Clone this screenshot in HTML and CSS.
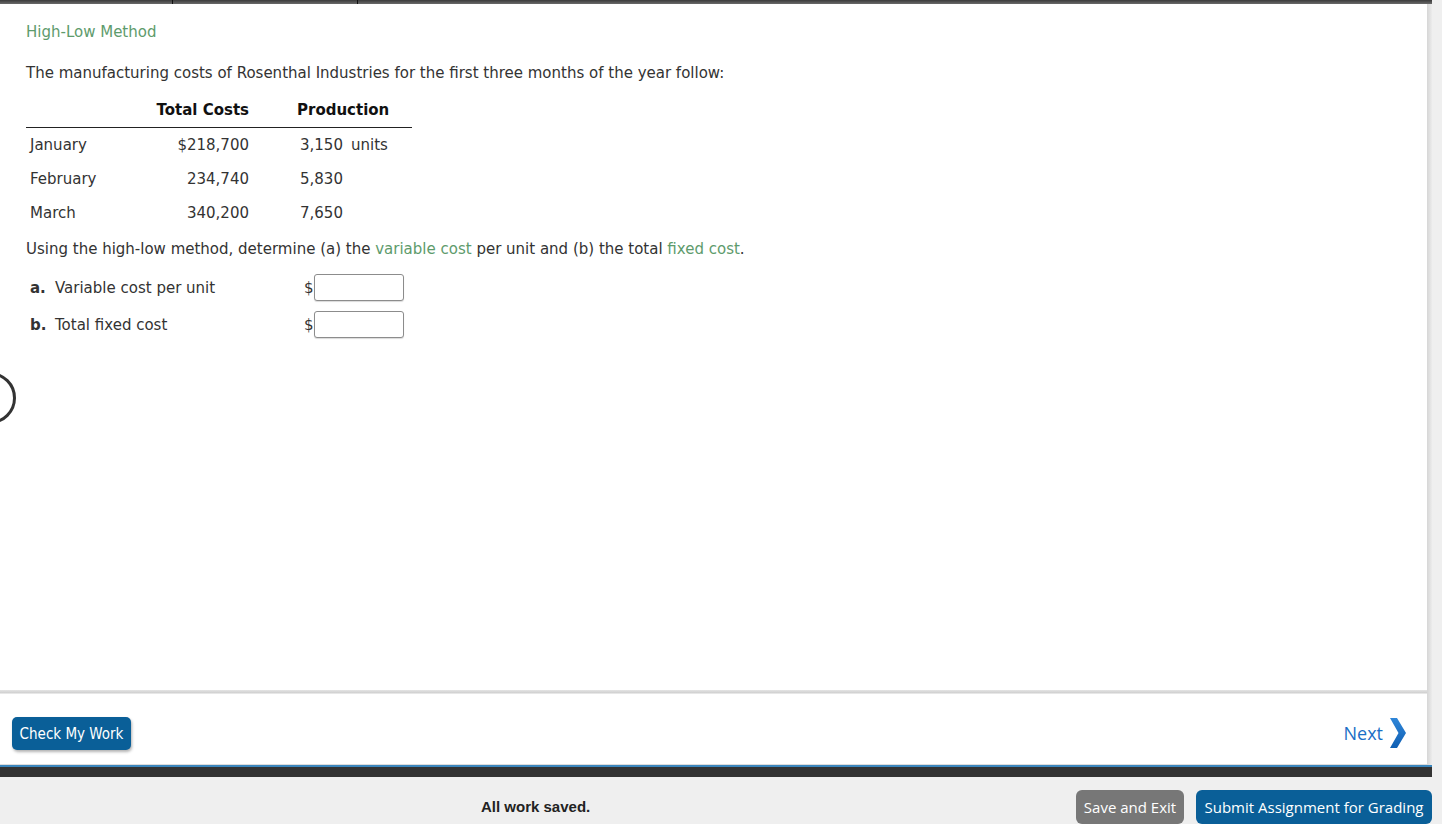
FILE: index.html
```html
<!DOCTYPE html>
<html>
<head>
<meta charset="utf-8">
<link rel="stylesheet" href="styles.css">
</head>
<body>
<div class="frame">
  <div class="topbar">
    <span class="seg seg1"></span><span class="seg seg2"></span><span class="seg seg3"></span>
  </div>
  <div class="body-row">
    <div class="col">
      <div class="content">
        <div class="title">High-Low Method</div>
        <p class="intro">The manufacturing costs of Rosenthal Industries for the first three months of the year follow:</p>
        <table class="data">
          <thead>
            <tr><th class="c1"></th><th class="c2">Total Costs</th><th class="c3">Production</th></tr>
          </thead>
          <tbody>
            <tr><td class="c1">January</td><td class="c2">$218,700</td><td class="c3">3,150<span class="unit">units</span></td></tr>
            <tr><td class="c1">February</td><td class="c2">234,740</td><td class="c3">5,830</td></tr>
            <tr><td class="c1">March</td><td class="c2">340,200</td><td class="c3">7,650</td></tr>
          </tbody>
        </table>
        <p class="question">Using the high-low method, determine (a) the <span class="term">variable cost</span> per unit and (b) the total <span class="term">fixed cost</span>.</p>
        <div class="answers">
          <div class="answer"><span class="letter">a.</span><span class="label">Variable cost per unit</span><span class="dollar">$</span><input class="box" type="text"></div>
          <div class="answer"><span class="letter">b.</span><span class="label">Total fixed cost</span><span class="dollar">$</span><input class="box" type="text"></div>
        </div>
        <div class="ring"></div>
      </div>
      <div class="footer">
        <button class="check">Check My Work</button>
        <a class="next">Next<svg class="chev" viewBox="0 0 18 32" width="18" height="32"><defs><linearGradient id="g" x1="0" y1="0" x2="0" y2="1"><stop offset="0" stop-color="#2f86d8"/><stop offset="1" stop-color="#0f5fb3"/></linearGradient></defs><path d="M1 1 L8 1 L17 16 L8 31 L1 31 L9.5 16 Z" fill="url(#g)"/></svg></a>
      </div>
    </div>
    <div class="strip"></div>
  </div>
  <div class="blueline"></div>
  <div class="darkbar"></div>
</div>
<div class="statusbar">
  <span class="saved">All work saved.</span>
  <div class="actions">
    <button class="save">Save and Exit</button>
    <button class="submit">Submit Assignment for Grading</button>
  </div>
</div>
</body>
</html>
```

FILE: styles.css
```css
html, body {
  margin: 0;
  padding: 0;
}
body {
  background: #efefef;
  font-family: "DejaVu Sans", Verdana, sans-serif;
  color: #333;
  width: 1442px;
  height: 824px;
  overflow: hidden;
}
.frame {
  width: 1432px;
}
.topbar {
  height: 4px;
  display: flex;
  background: linear-gradient(#3a3a3a, #6a6a6a);
}
.seg { height: 4px; }
.seg1 { width: 172px; border-right: 1px solid #111; }
.seg2 { width: 184px; border-right: 1px solid #111; }
.seg3 { flex: 1; }
.body-row {
  display: flex;
}
.col {
  width: 1427px;
  background: #fff;
}
.strip {
  width: 5px;
  background: linear-gradient(90deg, #d6d6d6, #e2e2e2 60%, #ececec);
}
.content {
  position: relative;
  height: 686px;
  padding: 0 0 0 26px;
  box-sizing: border-box;
  font-size: 15px;
}
.title {
  color: #5e9b6c;
  padding-top: 20px;
  line-height: 17px;
}
.intro {
  margin: 24px 0 0 0;
  line-height: 17px;
}
.data {
  border-collapse: collapse;
  table-layout: fixed;
  margin-top: 11px;
  width: 386px;
}
.data th {
  font-weight: bold;
  height: 34px;
  padding: 0;
  border-bottom: 1px solid #222;
  color: #111;
  vertical-align: middle;
}
.data td {
  height: 34px;
  padding: 0;
  vertical-align: middle;
}
.data .c1 { width: 114px; padding-left: 4px; text-align: left; }
.data .c2 { width: 105px; text-align: right; padding-right: 8px; }
.data .c3 { text-align: left; padding-left: 43px; }
.data th.c3 { padding-left: 40px; }
.unit { margin-left: 8px; }
.question {
  margin: 11px 0 0 0;
  line-height: 17px;
}
.term { color: #5e9b6c; }
.answers {
  margin-top: 16px;
  display: flex;
  flex-direction: column;
  gap: 10px;
}
.answer {
  display: flex;
  align-items: center;
  height: 27px;
}
.letter {
  font-weight: bold;
  width: 25px;
  padding-left: 4px;
}
.label {
  width: 249px;
}
.dollar {
  width: 10px;
}
.box {
  width: 90px;
  height: 27px;
  box-sizing: border-box;
  border: 1px solid #8c8c8c;
  border-radius: 3px;
  box-shadow: 0 1px 1px rgba(0,0,0,0.15);
  margin: 0;
  padding: 0;
}
.ring {
  position: absolute;
  left: -36px;
  top: 368px;
  width: 46px;
  height: 46px;
  border: 3px solid #333;
  border-radius: 50%;
}
.footer {
  height: 75px;
  background: linear-gradient(#e4e4e4, #cfcfcf 3px, #fff 4px);
  display: flex;
  align-items: center;
  justify-content: space-between;
  padding: 13px 20px 0 12px;
  box-sizing: border-box;
  border-bottom: 1px solid #ddd;
}
.check {
  height: 33px;
  width: 119px;
  background: #0a5f98;
  color: #fff;
  border: none;
  border-radius: 5px;
  font-family: "DejaVu Sans Condensed", Tahoma, sans-serif;
  font-size: 15px;
  padding: 0;
  box-shadow: 1px 2px 3px rgba(0,0,0,0.3);
}
.next {
  color: #1a6fc6;
  font-family: "Open Sans", sans-serif;
  font-size: 18px;
  display: flex;
  align-items: center;
  gap: 6px;
  margin-bottom: 2px;
}
.chev { display: block; }
.blueline {
  height: 2px;
  background: #3b86bd;
}
.darkbar {
  height: 10px;
  background: #333;
}
.statusbar {
  height: 47px;
  display: flex;
  align-items: center;
  justify-content: space-between;
  width: 1432px;
  padding-left: 481px;
  box-sizing: border-box;
}
.saved {
  font-family: "Liberation Sans", Arial, sans-serif;
  font-weight: bold;
  font-size: 15px;
  color: #222;
  margin-top: 12px;
}
.actions {
  display: flex;
  gap: 12px;
  margin-top: 13px;
}
.actions button {
  height: 34px;
  border: none;
  border-radius: 6px;
  color: #fff;
  font-family: "Open Sans", sans-serif;
  font-size: 15px;
  padding: 0;
}
.save {
  width: 108px;
  background: #777;
}
.submit {
  width: 236px;
  background: #0a5f98;
}
```
